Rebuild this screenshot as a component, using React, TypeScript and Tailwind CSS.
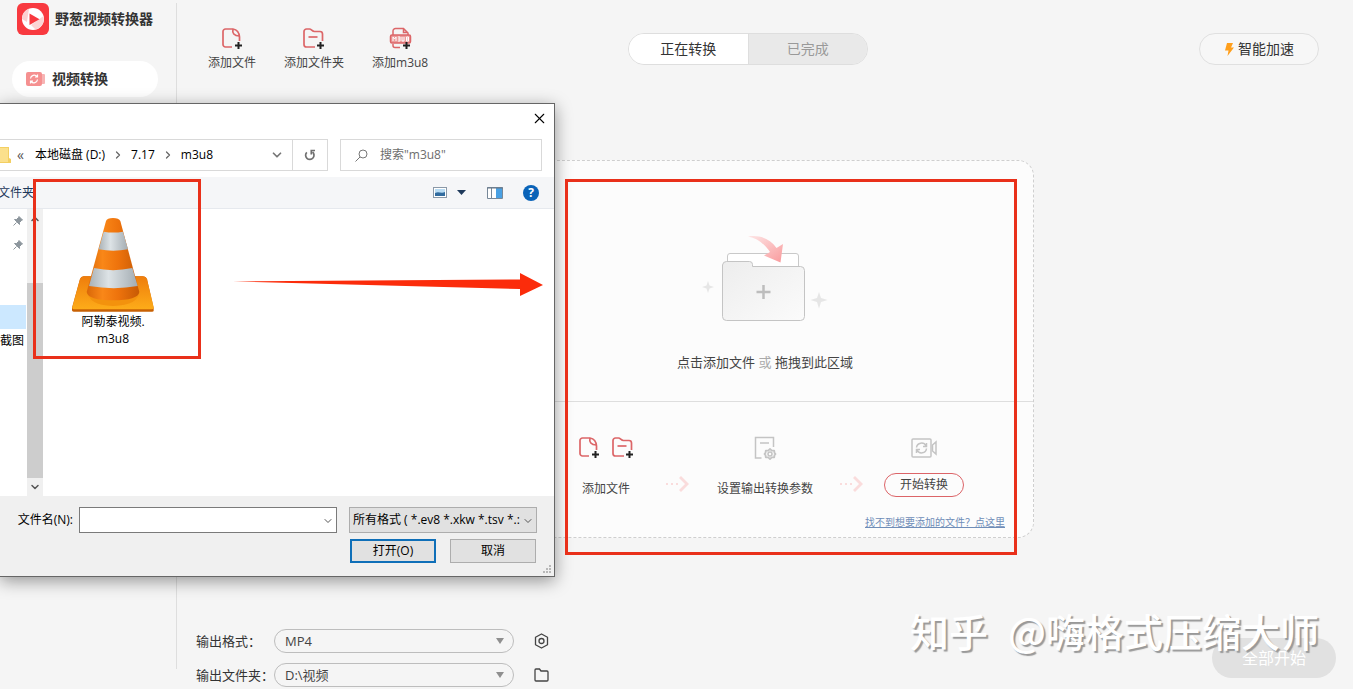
import type { ReactNode } from 'react';
import { ChevronDown, ChevronRight, ChevronUp, X } from 'lucide-react';

const steps = {
  add: '添加文件',
  settings: '设置输出转换参数',
  start: '开始转换',
};

function PlusMark() {
  return <path d="M18.500 15v7M15 18.500h7" stroke="#222" strokeWidth="2" />;
}

function FileAddIcon() {
  return (
    <svg width="24" height="24" viewBox="0 0 24 24" fill="none" stroke="#dc6668" strokeWidth="1.700">
      <path d="M12 20H5.500A2.500 2.500 0 0 1 3 17.500v-13A2.500 2.500 0 0 1 5.500 2H13q6 1 6.500 8v4" />
      <path d="M13 2c-1 4 1 7 6.500 7" />
      <PlusMark />
    </svg>
  );
}

function FolderAddIcon() {
  return (
    <svg width="24" height="24" viewBox="0 0 24 24" fill="none" stroke="#dc6668" strokeWidth="1.700">
      <path d="M13 20H4.500A2.500 2.500 0 0 1 2 17.500v-13A2.500 2.500 0 0 1 4.500 2H7.500c2 0 2.500 2.500 5 2.500H18A2.500 2.500 0 0 1 20.500 7v7" />
      <path d="M6.500 10H15.500" />
      <PlusMark />
    </svg>
  );
}

function M3u8Icon() {
  return (
    <svg width="24" height="24" viewBox="0 0 24 24" fill="none" stroke="#dc6668" strokeWidth="1.500">
      <path d="M5 8V4a2.500 2.500 0 0 1 2.500-2.500h8L20 6v2M15.500 2v3.500H20M5 17v1.500A2 2 0 0 0 7 20.500h5" />
      <rect x="2.500" y="8" width="20" height="8" rx="1.500" fill="#ec9c9c" />
      <path d="M5 14v-4l1.500 2L8 10v4M10 10h2v4h-2M10 12h2M14 10v4h2v-4M18.500 10h2v4h-2zM18.500 12h2" stroke="#fff" strokeWidth="1" />
      <PlusMark />
    </svg>
  );
}

function VideoIcon() {
  return (
    <svg width="20" height="16" viewBox="0 0 20 16" fill="none">
      <path d="M16 3h2a1 1 0 0 1 1 1v8a1 1 0 0 1-1 1h-2z" fill="#f7b3b3" />
      <rect x="0" y="1" width="16" height="14" rx="2" fill="#f59090" />
      <path d="M4.500 7.500a3.700 3.700 0 0 1 6.500-2M11.500 8.500a3.700 3.700 0 0 1-6.500 2M11.500 3.500v2.500H9M4.500 12.500V10H7" stroke="#fff" strokeWidth="1.200" />
    </svg>
  );
}

function LogoIcon() {
  return (
    <svg width="32" height="32" viewBox="0 0 32 32">
      <rect width="32" height="32" rx="6" fill="#f8393f" />
      <circle cx="16" cy="16" r="11" fill="#fff" />
      <path d="M12 5.800A11 11 0 0 0 5 16l5 3z" fill="#fcd0d0" />
      <path d="M26.500 13a11 11 0 0 1-8 13.500L14 22z" fill="#fbd5d5" />
      <path d="M12.500 10.500v11.500l10-5.800z" fill="#f8393f" />
    </svg>
  );
}

function SettingsStepIcon() {
  return (
    <svg width="24" height="24" viewBox="0 0 24 24" fill="none" stroke="#c4c4c4" strokeWidth="1.500">
      <path d="M8.500 22H2.500V1.500h18V11M7 7h9" />
      <path d="m17 13 1.800 1.600h2.400l.3 2.200 1 1.200-1 1.200-.3 2.200h-2.400L17 23l-1.800-1.600h-2.400l-.3-2.200-1-1.200 1-1.200.3-2.200h2.400z" strokeWidth="1.800" strokeLinejoin="round" />
      <circle cx="17" cy="18" r="2" />
    </svg>
  );
}

function ConvertStepIcon() {
  return (
    <svg width="26" height="22" viewBox="0 0 26 22" fill="none" stroke="#c4c4c4" strokeWidth="1.500">
      <rect x="1" y="2" width="19" height="18" rx="1" />
      <path d="M21.500 8 25 5v12l-3.500-3z" />
      <path d="M5.500 10.500a5 5 0 0 1 9.500-1.500M15.500 11.500A5 5 0 0 1 6 13M15.500 6v3.500H12M5.500 16v-3.500H9" />
    </svg>
  );
}

function StepArrow() {
  return (
    <svg className="mt-[39px]" width="24" height="18" viewBox="0 0 24 18" fill="none" stroke="#fadcdc">
      <path d="M0 9h2M5 9h2M10 9h2" strokeWidth="2" />
      <path d="m14 2 7 7-7 7" strokeWidth="2.800" />
    </svg>
  );
}

function FolderArt() {
  return (
    <svg width="126" height="88" viewBox="0 0 126 88" fill="none">
      <defs>
        <linearGradient id="folder" x1="0" y1="0" x2="1" y2="1">
          <stop offset="0" stopColor="#ededed" />
          <stop offset="1" stopColor="#fbfbfb" />
        </linearGradient>
        <linearGradient id="swoosh" x1="0" y1="0" x2="1" y2="1">
          <stop offset="0" stopColor="#fde6e6" />
          <stop offset="1" stopColor="#f99a9c" />
        </linearGradient>
      </defs>
      <path d="M25.500 40V20a2.500 2.500 0 0 1 2.500-2.500h66a2.500 2.500 0 0 1 2.500 2.500v20" fill="#fff" stroke="#c9c9c9" />
      <path d="M20.500 29a4 4 0 0 1 4-3.500h23a3 3 0 0 1 3 3v2h48a4 4 0 0 1 4 4v46a4 4 0 0 1-4 4h-74a4 4 0 0 1-4-4z" fill="url(#folder)" stroke="#c4c4c4" />
      <path d="M46 .500c12-2 22 2.500 28.500 11.500l6.500-4-2.500 18.500L62 19.500l6-3.500C63 9 56 2 46 .500z" fill="url(#swoosh)" />
      <path d="M61.500 49v14M54.500 56h14" stroke="#bdbdbd" strokeWidth="2.500" />
      <path d="m6 45 1.500 4.500L12 51l-4.500 1.500L6 57l-1.500-4.500L0 51l4.500-1.500zM117 56l2 6 6.500 2-6.500 2-2 6.500-2-6.500-6.500-2 6.500-2z" fill="#e6e6e6" />
    </svg>
  );
}

function ConeIcon() {
  return (
    <svg width="82" height="94" viewBox="216 353 246 282">
      <defs>
        <linearGradient id="cone" x1="0" x2="1">
          <stop offset="0" stopColor="#d96708" />
          <stop offset=".3" stopColor="#f98718" />
          <stop offset=".6" stopColor="#ee730c" />
          <stop offset="1" stopColor="#c75a04" />
        </linearGradient>
        <linearGradient id="base" x1="0" y1="0" x2="0" y2="1">
          <stop offset="0" stopColor="#ef7d0c" />
          <stop offset="1" stopColor="#fdac19" />
        </linearGradient>
        <linearGradient id="band" x1="0" x2="1">
          <stop offset="0" stopColor="#a9b1b6" />
          <stop offset=".4" stopColor="#dde3e6" />
          <stop offset="1" stopColor="#a3acb2" />
        </linearGradient>
      </defs>
      <path d="M251 528h176q11 0 14 9l20 86v8q0 3-5 3H221q-5 0-5-4v-8l24-86q3-8 11-8z" fill="#c86104" />
      <path d="M251 528h176q11 0 14 9l20 84q1 6-5 6H221q-5 0-4-6l23-85q3-8 11-8z" fill="url(#base)" />
      <path d="M263 572q0 42 76 45 78-2 79-45z" fill="#f3920d" />
      <path d="M318 362q3-9 21-9t22 9l57 213q-4 25-79 25t-79-25z" fill="url(#cone)" />
      <path d="M311 394q29 5 58 0l15 53q-44 8-88 0z" fill="url(#band)" />
      <path d="M282 503q57 13 115 0l16 54q-70 13-146 0z" fill="url(#band)" />
    </svg>
  );
}

function ToolButton({ icon, label }: { icon: ReactNode; label: string }) {
  return (
    <button className="flex flex-col items-center gap-1 text-xs leading-4 text-[#444]">
      {icon}
      {label}
    </button>
  );
}

function OutputRow({ id, label, value, action, icon }: { id: string; label: string; value: string; action: string; icon: ReactNode }) {
  return (
    <div className="flex items-center">
      <label htmlFor={id} className="w-[78px] text-[13px] leading-6 text-[#333]">{label}</label>
      <div className="relative">
        <select id={id} className="block h-6 w-60 appearance-none rounded-full border border-[#bdbdbd] bg-[#f5f5f5] px-2.5 text-[13px] leading-5 text-[#444]">
          <option>{value}</option>
        </select>
        <svg className="pointer-events-none absolute right-2.5 top-[9px]" width="8" height="6" viewBox="0 0 8 6">
          <path d="M0 0h8L4 6z" fill="#8f8f8f" />
        </svg>
      </div>
      <button aria-label={action} className="ml-5">{icon}</button>
    </div>
  );
}

function Sidebar() {
  return (
    <aside className="flex w-[177px] shrink-0 pt-[3px] pb-5">
      <div className="flex-1">
        <div className="flex items-center gap-1.5 pl-[17px] text-sm font-bold text-[#333]">
          <LogoIcon />
          野葱视频转换器
        </div>
        <nav className="mt-[26px] pr-[18px] pl-3">
          <a href="#convert" className="flex h-9 items-center gap-1.5 rounded-full bg-white pl-3.5 text-sm font-bold text-[#333]">
            <VideoIcon />
            视频转换
          </a>
        </nav>
      </div>
      <div className="w-px bg-[#dedede]" />
    </aside>
  );
}

function DropZone() {
  return (
    <section className="w-[538px] rounded-2xl border border-dashed border-[#cfcfcf] bg-[#fcfcfc] text-[#444]">
      <button className="flex h-[241px] w-full flex-col items-center border-b border-[#dedede] pt-[75px]">
        <FolderArt />
        <span className="mt-[26px] text-[13px] leading-6">
          点击添加文件 <span className="text-[#aaa]">或</span> 拖拽到此区域
        </span>
      </button>
      <div className="flex justify-center gap-5 pt-[34px] text-xs leading-4">
        <div className="flex w-20 flex-col items-center gap-[21px]">
          <div className="flex gap-2.5">
            <FileAddIcon />
            <FolderAddIcon />
          </div>
          {steps.add}
        </div>
        <StepArrow />
        <div className="flex w-[110px] flex-col items-center gap-[21px]">
          <SettingsStepIcon />
          {steps.settings}
        </div>
        <StepArrow />
        <div className="flex w-20 flex-col items-center gap-[13px]">
          <div className="flex h-6 items-center">
            <ConvertStepIcon />
          </div>
          <button className="h-6 w-20 rounded-full border border-[#dc6468]">{steps.start}</button>
        </div>
      </div>
      <div className="pt-[17px] pr-7 pb-[7px] text-right text-[10px] leading-4">
        <a href="#help" className="text-[#6f8db8] underline">找不到想要添加的文件？点这里</a>
      </div>
    </section>
  );
}

function Pin() {
  return (
    <svg width="10" height="10" viewBox="0 0 10 10" fill="#8d969d" stroke="#8d969d">
      <path d="M6 .500 9.500 4l-1 .500-2 2V8.500L1.500 3.500h2l2-2z" />
      <path d="m3.500 6.500-3 3" />
    </svg>
  );
}

function FileDialog() {
  return (
    <div role="dialog" aria-label="打开" className="absolute top-[103px] left-0 z-10 flex w-[555px] flex-col overflow-hidden border-t border-r border-b border-[#666] bg-white text-xs text-black shadow-[0_4px_16px_rgba(0,0,0,0.4)]">
      <div className="flex h-[35px] justify-end pt-1.5 pr-[7px]">
        <button aria-label="关闭" className="flex h-4 w-4 items-center justify-center">
          <X size={17} strokeWidth={1.5} className="shrink-0" />
        </button>
      </div>

      <div className="flex gap-3">
        <div className="flex h-8 w-[328px] border border-l-0 border-[#d9d9d9]">
          <div className="flex flex-1 items-center">
            <svg width="11" height="16" viewBox="0 0 11 16">
              <path d="M0 0h9v11l2 1v4H0z" fill="#f3cf62" />
              <path d="M0 1h8v14H0z" fill="#fbe08c" />
            </svg>
            <span className="ml-1.5 w-[18px] text-sm leading-4 text-[#555]">«</span>
            <span>本地磁盘 (D:)</span>
            <ChevronRight size={12} strokeWidth={2.5} className="mx-[7px] text-[#666]" />
            <span>7.17</span>
            <ChevronRight size={12} strokeWidth={2.5} className="mx-[7px] text-[#666]" />
            <span>m3u8</span>
            <button aria-label="展开路径" className="mr-2 ml-auto">
              <ChevronDown size={14} strokeWidth={3} className="text-[#777]" />
            </button>
          </div>
          <button aria-label="刷新" className="flex w-[35px] items-center justify-center border-l border-[#d9d9d9]">
            <svg width="12" height="12" viewBox="0 0 12 12" fill="none" stroke="#707070" strokeWidth="1.700">
              <path d="M2.800 3.300A4.200 4.200 0 1 0 8.500 3" />
              <path d="M11 1.500H7.300v4" />
            </svg>
          </button>
        </div>
        <label className="flex h-8 w-[202px] items-center gap-3 border border-[#d9d9d9] pl-3.5">
          <svg width="13" height="13" viewBox="0 0 13 13" fill="none" stroke="#777">
            <circle cx="8" cy="5" r="4" />
            <path d="M5 8 .500 12.500" />
          </svg>
          <input aria-label="搜索" placeholder={'搜索"m3u8"'} className="w-36 outline-none placeholder:text-[#6d6d6d]" />
        </label>
      </div>

      <div className="mt-1.5 flex h-8 items-center border-b border-[#e6e9ee] bg-[#f5f6f8] pr-[15px] text-[#1e395b]">
        <button className="-ml-0.5">文件夹</button>
        <button aria-label="更改视图" className="ml-auto flex items-center gap-2.5">
          <svg width="14" height="11" viewBox="0 0 14 11">
            <rect x=".5" y=".5" width="13" height="10" fill="#fff" stroke="#8b99a8" />
            <path d="M2 2h10v7H2z" fill="#b9dcf4" />
            <path d="M2 6c4-2 6 1 10-1v4H2z" fill="#326c9f" />
          </svg>
          <svg width="9" height="5" viewBox="0 0 9 5">
            <path d="M0 0h9L4.500 5z" fill="#1e395b" />
          </svg>
        </button>
        <button aria-label="预览窗格" className="ml-[21px]">
          <svg width="16" height="12" viewBox="0 0 16 12">
            <path d="M.5.500h15v11H.5zM4.500 1v10" fill="#fff" stroke="#778899" />
            <path d="M9 1h6v10H9z" fill="#49a0e3" />
            <path d="M0 1h16" stroke="#667788" />
          </svg>
        </button>
        <button aria-label="帮助" className="ml-5 flex h-4 w-4 items-center justify-center rounded-full bg-[#0a63b8] text-xs font-bold text-white">?</button>
      </div>

      <div className="flex h-[287px]">
        <div className="flex w-[27px] flex-col">
          <div className="flex flex-col items-end gap-3.5 pt-[7px] pr-1">
            <Pin />
            <Pin />
          </div>
          <div className="mt-[55px] h-6 w-[26px] bg-[#cce8ff]" />
          <span className="mt-1 leading-4 whitespace-nowrap">截图</span>
        </div>
        <div className="flex w-4 flex-col items-center bg-[#f0f0f0]">
          <ChevronUp size={12} strokeWidth={3} className="mt-1 text-[#555]" />
          <div className="mt-[58px] w-full flex-1 bg-[#cdcdcd]" />
          <ChevronDown size={12} strokeWidth={3} className="my-[3px] text-[#555]" />
        </div>
        <button className="ml-[29px] flex w-[82px] flex-col items-center self-start pt-[9px] leading-[17px]">
          <ConeIcon />
          <span className="pt-px">阿勒泰视频.<br />m3u8</span>
        </button>
      </div>

      <div className="relative flex flex-col items-end gap-1.5 bg-[#f0f0f0] pt-[11px] pr-[17px] pb-[13px]">
        <div className="flex items-center">
          <label htmlFor="filename" className="pr-1.5">文件名(N):</label>
          <div className="relative">
            <input id="filename" className="block h-[26px] w-[258px] border border-[#7a7a7a] bg-white px-1 outline-none" />
            <ChevronDown size={12} strokeWidth={2} className="pointer-events-none absolute top-2 right-[3px] text-[#555]" />
          </div>
          <div className="relative ml-3">
            <select aria-label="文件类型" className="block h-[26px] w-[188px] appearance-none overflow-hidden border border-[#adadad] bg-[#e1e1e1] pr-4 pl-[3px]">
              <option>所有格式 ( *.ev8 *.xkw *.tsv *.:</option>
            </select>
            <ChevronDown size={12} strokeWidth={2} className="pointer-events-none absolute top-2 right-[3px] text-[#555]" />
          </div>
        </div>
        <div className="flex gap-3.5 pr-px">
          <button className="h-6 w-[86px] border-2 border-[#0f6fb8] bg-[#e1e1e1]">打开(O)</button>
          <button className="h-6 w-[86px] border border-[#adadad] bg-[#e1e1e1]">取消</button>
        </div>
        <svg className="absolute right-0.5 bottom-0.5" width="9" height="9" viewBox="0 0 9 9" fill="#b8b8b8">
          <path d="M6 0h2v2H6zM3 3h2v2H3zM6 3h2v2H6zM0 6h2v2H0zM3 6h2v2H3zM6 6h2v2H6z" />
        </svg>
      </div>
    </div>
  );
}

function Annotations() {
  return (
    <div className="pointer-events-none">
      <div className="absolute top-[179px] left-[33px] z-20 h-[180px] w-[168px] border-3 border-[#e9301a]" />
      <div className="absolute top-[179px] left-[565px] z-20 h-[376px] w-[452px] border-3 border-[#e9301a]" />
      <svg className="absolute top-[272px] left-[233px] z-20" width="310" height="26" viewBox="0 0 310 26" fill="#fb2c0b">
        <path d="M0 9.500 287 7.500V1l23 12-23 11v-7z" />
      </svg>
      <div className="absolute right-[34px] bottom-[30px] z-20 flex gap-5 font-['Noto_Sans_CJK_SC',sans-serif] text-[39px] leading-[58px] font-medium whitespace-nowrap text-white [text-shadow:2px_2px_1px_#999]">
        <span>知乎</span>
        <span>@嗨格式压缩大师</span>
      </div>
    </div>
  );
}

export default function App() {
  return (
    <div className="relative flex min-h-screen overflow-hidden bg-[#f5f5f5] font-['Open_Sans','Noto_Sans_CJK_SC',sans-serif]">
      <Sidebar />

      <main className="flex flex-1 flex-col">
        <header className="grid grid-cols-[1fr_240px_1fr] items-center pt-[27px] pr-[34px]">
          <div className="flex items-start gap-7 pl-[31px]">
            <ToolButton icon={<FileAddIcon />} label="添加文件" />
            <ToolButton icon={<FolderAddIcon />} label="添加文件夹" />
            <ToolButton icon={<M3u8Icon />} label="添加m3u8" />
          </div>
          <div className="flex h-8 overflow-hidden rounded-full border border-[#dedede] text-sm">
            <button className="flex-1 border-r border-[#dedede] bg-white text-[#333]">正在转换</button>
            <button className="flex-1 bg-[#e9e9e9] text-[#999]">已完成</button>
          </div>
          <button className="flex h-8 w-[120px] items-center justify-center gap-1 justify-self-end rounded-full border border-[#e0e0e0] bg-[#f7f7f7] text-sm text-[#333]">
            <svg width="10" height="13" viewBox="0 0 10 13">
              <path d="M3 0h6L7 4.500h3L3.500 13l1-5.500H1z" fill="#ff9f1c" />
            </svg>
            智能加速
          </button>
        </header>

        <div className="flex flex-1 items-center justify-center pb-0.5">
          <DropZone />
        </div>

        <footer className="flex items-center justify-between pr-[17px] pb-0.5 pl-[19px]">
          <div className="flex flex-col gap-2.5">
            <OutputRow
              id="format"
              label="输出格式："
              value="MP4"
              action="格式设置"
              icon={
                <svg width="15" height="16" viewBox="0 0 15 16" fill="none" stroke="#444" strokeWidth="1.300">
                  <path d="m7.500 1 6 3.300v7.400l-6 3.300-6-3.300V4.300z" strokeLinejoin="round" />
                  <circle cx="7.500" cy="8" r="2.500" />
                </svg>
              }
            />
            <OutputRow
              id="folder-path"
              label="输出文件夹："
              value="D:\视频"
              action="打开文件夹"
              icon={
                <svg width="15" height="14" viewBox="0 0 15 14" fill="none" stroke="#444" strokeWidth="1.300">
                  <path d="M1 12V2a1 1 0 0 1 1-1h3.500L7 3h6a1 1 0 0 1 1 1v8a1 1 0 0 1-1 1H2a1 1 0 0 1-1-1z" />
                </svg>
              }
            />
          </div>
          <button className="h-10 w-[124px] rounded-full bg-[#e1e1e1] text-base text-white">全部开始</button>
        </footer>
      </main>

      <FileDialog />
      <Annotations />
    </div>
  );
}
